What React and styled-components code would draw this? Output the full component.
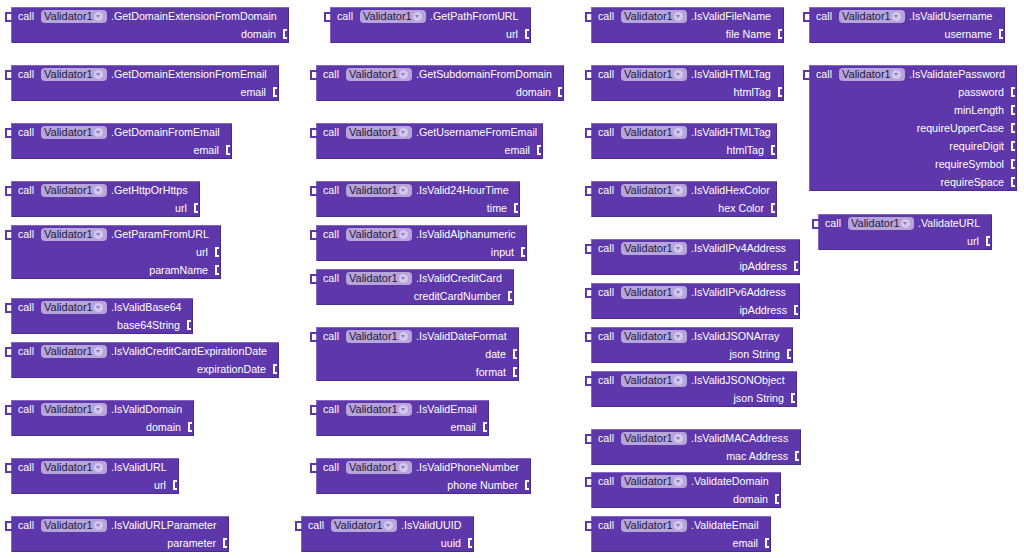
import React from 'react'
import styled, { createGlobalStyle } from 'styled-components'

const GlobalStyle = createGlobalStyle`
    html, body {
        margin: 0;
        padding: 0;
        background: #ffffff;
    }
    body {
        font-family: "Liberation Sans", Arial, sans-serif;
    }
`

const Workspace = styled.div`
    position: relative;
    width: 1024px;
    height: 558px;
    overflow: hidden;
    background: #ffffff;
`

const Block = styled.div`
    position: absolute;
    left: ${p => p.$x}px;
    top: ${p => p.$y}px;
    width: ${p => p.$w}px;
    display: flex;
    flex-direction: column;
    background: #5e37aa;
    box-shadow: inset 1px 1px 0 #8466c4, inset 0 -1px 0 #4a2a8a, inset -1px 0 0 #4a2a8a;
    color: #ffffff;
    font-size: 10.7px;
    line-height: 13px;
    white-space: nowrap;
`

const OutputTab = styled.svg`
    position: absolute;
    left: -6px;
    top: 5px;
    width: 7px;
    height: 10px;
`

const Header = styled.div`
    height: 18px;
    display: flex;
    align-items: center;
    padding-left: 7px;
`

const Call = styled.span`
    width: 23px;
`

const Picker = styled.span`
    width: 66px;
    height: 13px;
    box-sizing: border-box;
    display: flex;
    align-items: center;
    justify-content: space-between;
    padding: 0 4px 0 3px;
    border-radius: 4px;
    background: #b6a5da;
    color: #24173d;
    font-size: 11px;
`

const Arrow = styled.span`
    width: 9px;
    height: 9px;
    border-radius: 50%;
    background: #d3c8ee;
    position: relative;

    &::after {
        content: '';
        position: absolute;
        left: 2px;
        top: 3px;
        border-left: 2.5px solid transparent;
        border-right: 2.5px solid transparent;
        border-top: 3px solid #8a78b8;
    }
`

const Method = styled.span`
    margin-left: 4px;
`

const InputRow = styled.div`
    height: 18px;
    display: flex;
    align-items: center;
    justify-content: flex-end;
    padding-right: 2px;
`

const Socket = styled.svg`
    width: 4px;
    height: 10px;
    margin-left: 7px;
    flex-shrink: 0;
`

const blocks = [
    { x: 11, y: 7, r: 289, name: 'GetDomainExtensionFromDomain', inputs: ['domain'] },
    { x: 11, y: 65, r: 279, name: 'GetDomainExtensionFromEmail', inputs: ['email'] },
    { x: 11, y: 123, r: 232, name: 'GetDomainFromEmail', inputs: ['email'] },
    { x: 11, y: 181, r: 200, name: 'GetHttpOrHttps', inputs: ['url'] },
    { x: 11, y: 225, r: 221, name: 'GetParamFromURL', inputs: ['url', 'paramName'] },
    { x: 11, y: 298, r: 193, name: 'IsValidBase64', inputs: ['base64String'] },
    { x: 11, y: 342, r: 279, name: 'IsValidCreditCardExpirationDate', inputs: ['expirationDate'] },
    { x: 11, y: 400, r: 194, name: 'IsValidDomain', inputs: ['domain'] },
    { x: 11, y: 458, r: 179, name: 'IsValidURL', inputs: ['url'] },
    { x: 11, y: 516, r: 229, name: 'IsValidURLParameter', inputs: ['parameter'] },

    { x: 330, y: 7, r: 531, name: 'GetPathFromURL', inputs: ['url'] },
    { x: 316, y: 65, r: 564, name: 'GetSubdomainFromDomain', inputs: ['domain'] },
    { x: 316, y: 123, r: 543, name: 'GetUsernameFromEmail', inputs: ['email'] },
    { x: 316, y: 181, r: 520, name: 'IsValid24HourTime', inputs: ['time'] },
    { x: 316, y: 225, r: 527, name: 'IsValidAlphanumeric', inputs: ['input'] },
    { x: 316, y: 269, r: 514, name: 'IsValidCreditCard', inputs: ['creditCardNumber'] },
    { x: 316, y: 327, r: 519, name: 'IsValidDateFormat', inputs: ['date', 'format'] },
    { x: 316, y: 400, r: 489, name: 'IsValidEmail', inputs: ['email'] },
    { x: 316, y: 458, r: 531, name: 'IsValidPhoneNumber', inputs: ['phone Number'] },
    { x: 301, y: 516, r: 474, name: 'IsValidUUID', inputs: ['uuid'] },

    { x: 591, y: 7, r: 784, name: 'IsValidFileName', inputs: ['file Name'] },
    { x: 591, y: 65, r: 784, name: 'IsValidHTMLTag', inputs: ['htmlTag'] },
    { x: 591, y: 123, r: 777, name: 'IsValidHTMLTag', inputs: ['htmlTag'] },
    { x: 591, y: 181, r: 777, name: 'IsValidHexColor', inputs: ['hex Color'] },
    { x: 591, y: 239, r: 800, name: 'IsValidIPv4Address', inputs: ['ipAddress'] },
    { x: 591, y: 283, r: 800, name: 'IsValidIPv6Address', inputs: ['ipAddress'] },
    { x: 591, y: 327, r: 793, name: 'IsValidJSONArray', inputs: ['json String'] },
    { x: 591, y: 371, r: 797, name: 'IsValidJSONObject', inputs: ['json String'] },
    { x: 591, y: 429, r: 801, name: 'IsValidMACAddress', inputs: ['mac Address'] },
    { x: 591, y: 472, r: 781, name: 'ValidateDomain', inputs: ['domain'] },
    { x: 591, y: 516, r: 771, name: 'ValidateEmail', inputs: ['email'] },

    { x: 809, y: 7, r: 1005, name: 'IsValidUsername', inputs: ['username'] },
    { x: 809, y: 65, r: 1017, name: 'IsValidatePassword', inputs: ['password', 'minLength', 'requireUpperCase', 'requireDigit', 'requireSymbol', 'requireSpace'] },
    { x: 818, y: 214, r: 992, name: 'ValidateURL', inputs: ['url'] },
]

// puzzle tab outline: a bracket, purple as the plug, white as the socket
const socketPath = 'M0 0H4V2H2V8H4V10H0Z'
const plugPath = 'M0 0H7V2H2V8H7V10H0Z'

const MethodBlock = ({ block }) => (
    <Block $x={block.x} $y={block.y} $w={block.r - block.x}>
        <OutputTab viewBox="0 0 7 10">
            <path d={plugPath} fill="#5e37aa" />
        </OutputTab>
        <Header>
            <Call>call</Call>
            <Picker>
                Validator1
                <Arrow />
            </Picker>
            <Method>.{block.name}</Method>
        </Header>
        {block.inputs.map((label, i) => (
            <InputRow key={i}>
                <span>{label}</span>
                <Socket viewBox="0 0 4 10">
                    <path d={socketPath} fill="#ffffff" />
                </Socket>
            </InputRow>
        ))}
    </Block>
)

export default function App() {
    return (
        <>
            <GlobalStyle />
            <Workspace>
                {blocks.map((b, i) => <MethodBlock key={i} block={b} />)}
            </Workspace>
        </>
    )
}
